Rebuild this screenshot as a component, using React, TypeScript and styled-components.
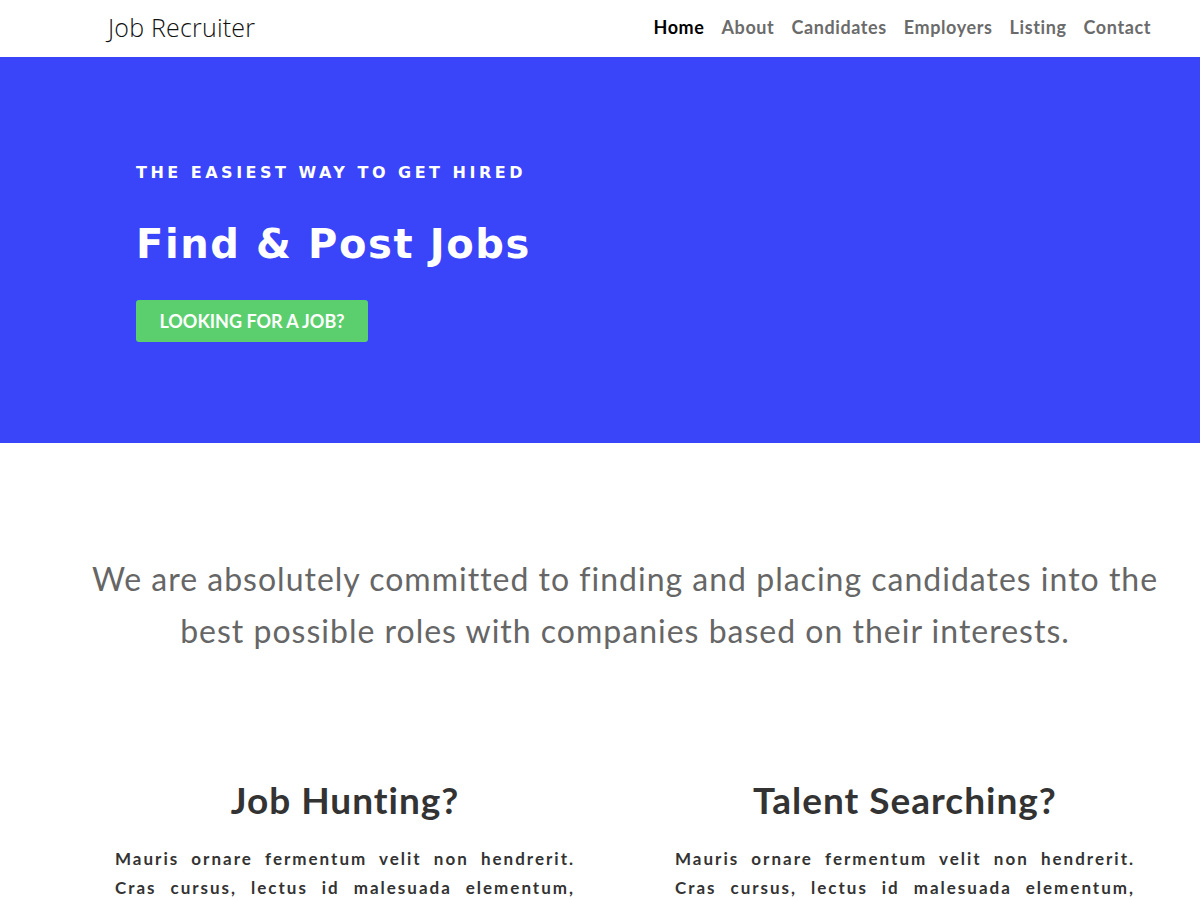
import styled, { createGlobalStyle } from "styled-components";

const GlobalStyle = createGlobalStyle`
  * {
    box-sizing: border-box;
  }
  body {
    margin: 0;
    background: #ffffff;
    font-family: "Lato", "Open Sans", sans-serif;
  }
`;

const Page = styled.div`
  width: 1200px;
  overflow: hidden;
`;

const Navbar = styled.header`
  height: 57px;
  display: flex;
  align-items: center;
  justify-content: space-between;
  padding: 0 49px 4px 108px;
  background: #ffffff;
`;

const Brand = styled.a`
  font-family: "Open Sans", sans-serif;
  font-weight: 300;
  font-size: 25px;
  letter-spacing: 0.2px;
  color: #111111;
  text-decoration: none;
`;

const NavLinks = styled.nav`
  display: flex;
  gap: 17px;
`;

const NavLink = styled.a<{ $active?: boolean }>`
  font-family: "Lato", sans-serif;
  font-weight: 700;
  font-size: 18px;
  letter-spacing: 0.6px;
  color: ${({ $active }) => ($active ? "#000000" : "#6b6b6b")};
  text-decoration: none;
`;

const Hero = styled.section`
  height: 386px;
  background: #3a44f9;
  padding: 106px 0 0 136px;
`;

const Eyebrow = styled.p`
  margin: 0;
  font-family: "DejaVu Sans", sans-serif;
  font-weight: 700;
  font-size: 16px;
  letter-spacing: 3.5px;
  color: #ffffff;
`;

const HeroTitle = styled.h1`
  margin: 42px 0 0;
  font-family: "DejaVu Sans", sans-serif;
  font-weight: 700;
  font-size: 40px;
  letter-spacing: 1.6px;
  line-height: 1;
  color: #ffffff;
`;

const HeroButton = styled.a`
  display: inline-flex;
  align-items: center;
  justify-content: center;
  margin-top: 36px;
  width: 232px;
  height: 42px;
  border-radius: 3px;
  background: #5bcf6d;
  color: #ffffff;
  font-family: "Lato", sans-serif;
  font-weight: 700;
  font-size: 18px;
  text-decoration: none;
`;

const Main = styled.main`
  width: 1120px;
  margin-left: 65px;
`;

const Intro = styled.p`
  margin: 110px auto 0;
  max-width: 1080px;
  text-align: center;
  font-family: "Lato", sans-serif;
  font-weight: 400;
  font-size: 32px;
  letter-spacing: 1px;
  line-height: 52px;
  color: #666666;
`;

const Columns = styled.div`
  display: grid;
  grid-template-columns: 1fr 1fr;
  margin-top: 121px;
`;

const Column = styled.div`
  padding: 0 50px;
`;

const ColumnTitle = styled.h2`
  margin: 0;
  text-align: center;
  font-family: "Lato", sans-serif;
  font-weight: 700;
  font-size: 37px;
  letter-spacing: 1px;
  line-height: 1.2;
  color: #333333;
`;

const ColumnText = styled.p`
  margin: 22px 0 0;
  text-align: justify;
  font-family: "Lato", sans-serif;
  font-weight: 700;
  font-size: 17px;
  letter-spacing: 2px;
  line-height: 29px;
  color: #333333;
`;

const navItems = ["Home", "About", "Candidates", "Employers", "Listing", "Contact"];

const lorem =
  "Mauris ornare fermentum velit non hendrerit. Cras cursus, lectus id malesuada elementum, nisi ligula consequat eros, in tincidunt ipsum enim quis nunc. Vestibulum ante ipsum primis in faucibus orci luctus et ultrices posuere cubilia curae.";

const columns = [
  { title: "Job Hunting?", text: lorem },
  { title: "Talent Searching?", text: lorem },
];

const App = () => {
  return (
    <Page>
      <GlobalStyle />
      <Navbar>
        <Brand href="#">Job Recruiter</Brand>
        <NavLinks>
          {navItems.map((item, idx) => (
            <NavLink key={item} href="#" $active={idx === 0}>
              {item}
            </NavLink>
          ))}
        </NavLinks>
      </Navbar>
      <Hero>
        <Eyebrow>THE EASIEST WAY TO GET HIRED</Eyebrow>
        <HeroTitle>Find &amp; Post Jobs</HeroTitle>
        <HeroButton href="#">LOOKING FOR A JOB?</HeroButton>
      </Hero>
      <Main>
        <Intro>
          We are absolutely committed to finding and placing candidates into the best possible
          roles with companies based on their interests.
        </Intro>
        <Columns>
          {columns.map((col) => (
            <Column key={col.title}>
              <ColumnTitle>{col.title}</ColumnTitle>
              <ColumnText>{col.text}</ColumnText>
            </Column>
          ))}
        </Columns>
      </Main>
    </Page>
  );
};

export default App;
